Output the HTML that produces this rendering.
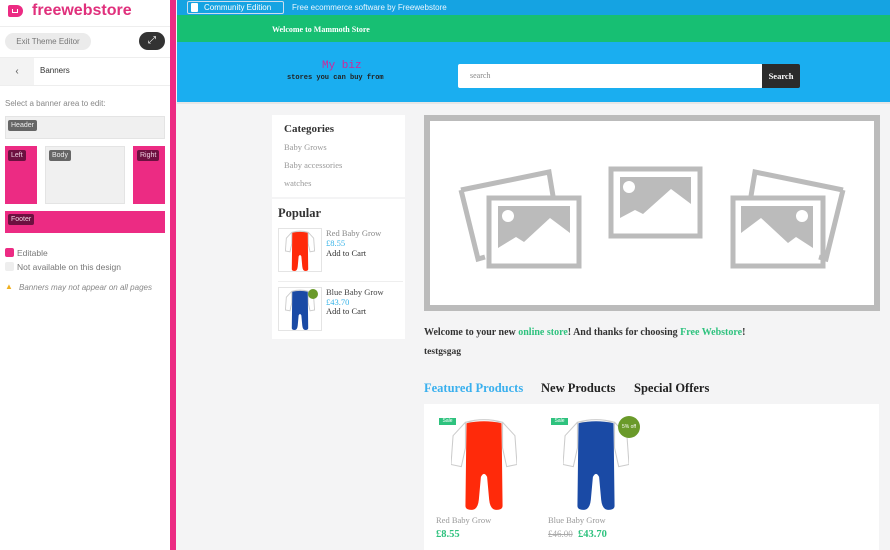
<!DOCTYPE html>
<html><head><meta charset="utf-8"><style>
*{margin:0;padding:0;box-sizing:border-box}
body{width:890px;height:550px;overflow:hidden;position:relative;background:#f4f4f5;font-family:"Liberation Sans",sans-serif}
.a{position:absolute}
.serif{font-family:"Liberation Serif",serif}
.tag{position:absolute;background:#6d1040;font-size:7px;color:#f0d0e0;padding:2px 3px;border-radius:2px}
</style></head><body>
<div class="a" style="left:0;top:0;width:170px;height:550px;background:#fff"></div>
<div class="a" style="left:170px;top:0;width:6px;height:550px;background:#ec2b83"></div>
<div class="a" style="left:8px;top:5px;width:15px;height:12px;background:#ec2b83;border-radius:2px 6px 6px 2px"></div>
<div class="a" style="left:12px;top:9px;width:6px;height:4px;border:1px solid #fff;border-top:none"></div>
<div class="a" style="left:32px;top:2px;font-size:16px;font-weight:bold;color:#e0307c">freewebstore</div>
<div class="a" style="left:0;top:26px;width:170px;height:1px;background:#eee"></div>
<div class="a" style="left:5px;top:33px;width:86px;height:17px;background:#ebebeb;border-radius:9px;font-size:8px;color:#777;text-align:center;line-height:17px">Exit Theme Editor</div>
<div class="a" style="left:139px;top:32px;width:26px;height:18px;background:#333;border-radius:9px;color:#fff;font-size:10px;text-align:center;line-height:18px">⤢</div>
<div class="a" style="left:0;top:57px;width:170px;height:1px;background:#eee"></div>
<div class="a" style="left:0;top:58px;width:34px;height:27px;background:#f3f3f3;font-size:10px;color:#555;text-align:center;line-height:27px">‹</div>
<div class="a" style="left:40px;top:66px;font-size:8px;color:#333">Banners</div>
<div class="a" style="left:0;top:85px;width:170px;height:1px;background:#eee"></div>
<div class="a" style="left:5px;top:99px;font-size:8px;color:#888">Select a banner area to edit:</div>
<div class="a" style="left:5px;top:116px;width:160px;height:23px;background:#f0f0f0;border:1px solid #e4e4e4"></div>
<div class="tag" style="left:8px;top:120px;background:#666;color:#eee">Header</div>
<div class="a" style="left:5px;top:146px;width:32px;height:58px;background:#ec2b83"></div>
<div class="tag" style="left:8px;top:150px">Left</div>
<div class="a" style="left:45px;top:146px;width:80px;height:58px;background:#f0f0f0;border:1px solid #e4e4e4"></div>
<div class="tag" style="left:49px;top:150px;background:#666;color:#eee">Body</div>
<div class="a" style="left:133px;top:146px;width:32px;height:58px;background:#ec2b83"></div>
<div class="tag" style="left:137px;top:150px">Right</div>
<div class="a" style="left:5px;top:211px;width:160px;height:22px;background:#ec2b83"></div>
<div class="tag" style="left:8px;top:214px">Footer</div>
<div class="a" style="left:5px;top:248px;width:9px;height:9px;background:#ec2b83;border-radius:2px"></div>
<div class="a" style="left:17px;top:248px;font-size:8.5px;color:#777">Editable</div>
<div class="a" style="left:5px;top:262px;width:9px;height:9px;background:#eee;border-radius:2px"></div>
<div class="a" style="left:17px;top:262px;font-size:8.5px;color:#777">Not available on this design</div>
<div class="a" style="left:5px;top:282px;font-size:8px;color:#f0b020">▲</div>
<div class="a" style="left:19px;top:283px;font-size:8px;color:#888;font-style:italic">Banners may not appear on all pages</div>

<div class="a" style="left:177px;top:0;width:713px;height:15px;background:#15a3e2"></div>
<div class="a" style="left:187px;top:1px;width:97px;height:13px;border:1px solid #cde;border-radius:2px;font-size:8px;color:#fff;line-height:11px;padding-left:16px">Community Edition</div>
<div class="a" style="left:191px;top:3px;width:7px;height:9px;background:#fff;border-radius:1px"></div>
<div class="a" style="left:292px;top:3px;font-size:8px;color:#eaf6ff">Free ecommerce software by Freewebstore</div>
<div class="a" style="left:177px;top:15px;width:713px;height:27px;background:#17bf73"></div>
<div class="a serif" style="left:272px;top:25px;font-size:8px;color:#fff;font-weight:bold">Welcome to Mammoth Store</div>
<div class="a" style="left:177px;top:42px;width:713px;height:60px;background:#1aaef0"></div>
<div class="a" style="left:177px;top:102px;width:713px;height:2px;background:#e6e6e6"></div>
<div class="a" style="left:322px;top:60px;font-family:'Liberation Mono',monospace;font-size:11px;color:#d2279a">My biz</div>
<div class="a" style="left:287px;top:74px;font-family:'Liberation Mono',monospace;font-size:7px;font-weight:bold;color:#222">stores you can buy from</div>
<div class="a" style="left:458px;top:64px;width:305px;height:24px;background:#fff;border-radius:2px"></div>
<div class="a serif" style="left:470px;top:71px;font-size:8px;color:#888">search</div>
<div class="a serif" style="left:762px;top:64px;width:38px;height:24px;background:#2b2b2b;border-radius:0 2px 2px 0;color:#fff;font-size:8.5px;font-weight:bold;text-align:center;line-height:24px">Search</div>

<div class="a" style="left:272px;top:115px;width:133px;height:82px;background:#fff"></div>
<div class="a serif" style="left:284px;top:123px;font-size:11px;font-weight:bold;color:#333">Categories</div>
<div class="a serif" style="left:284px;top:142px;font-size:8.5px;color:#999">Baby Grows</div>
<div class="a serif" style="left:284px;top:160px;font-size:8.5px;color:#999">Baby accessories</div>
<div class="a serif" style="left:284px;top:178px;font-size:8.5px;color:#999">watches</div>
<div class="a" style="left:272px;top:199px;width:133px;height:140px;background:#fff"></div>
<div class="a serif" style="left:278px;top:206px;font-size:12.5px;font-weight:bold;color:#333">Popular</div>
<div class="a" style="left:278px;top:228px;width:44px;height:44px;border:1px solid #e4e4e4;background:#fff"></div>
<svg class="a" style="left:283px;top:230px" width="34" height="41" viewBox="0 0 64 90"><path d="M14 5 Q32 0 50 5 L62 18 L64 46 L54 48 L50 30 L50 5 L14 5 L14 30 L10 48 L0 46 L2 18 Z" fill="#fff" stroke="#ccc" stroke-width="2"/><path d="M15 6 Q32 2 49 6 L50 86 Q50 90 44 90 Q38 90 37 80 L35 58 Q32 52 29 58 L27 80 Q26 90 20 90 Q14 90 14 86 Z" fill="#ff2a0a"/></svg>
<div class="a serif" style="left:326px;top:228px;font-size:8.5px;color:#888">Red Baby Grow</div>
<div class="a serif" style="left:326px;top:238px;font-size:8.5px;color:#35b3e8">£8.55</div>
<div class="a serif" style="left:326px;top:248px;font-size:8.5px;color:#333">Add to Cart</div>
<div class="a" style="left:278px;top:281px;width:125px;height:1px;background:#eee"></div>
<div class="a" style="left:278px;top:287px;width:44px;height:44px;border:1px solid #e4e4e4;background:#fff"></div>
<svg class="a" style="left:283px;top:289px" width="34" height="41" viewBox="0 0 64 90"><path d="M14 5 Q32 0 50 5 L62 18 L64 46 L54 48 L50 30 L50 5 L14 5 L14 30 L10 48 L0 46 L2 18 Z" fill="#fff" stroke="#ccc" stroke-width="2"/><path d="M15 6 Q32 2 49 6 L50 86 Q50 90 44 90 Q38 90 37 80 L35 58 Q32 52 29 58 L27 80 Q26 90 20 90 Q14 90 14 86 Z" fill="#1a4aa5"/></svg>
<div class="a" style="left:308px;top:289px;width:10px;height:10px;border-radius:50%;background:#6a9a2a"></div>
<div class="a serif" style="left:326px;top:287px;font-size:8.5px;color:#444">Blue Baby Grow</div>
<div class="a serif" style="left:326px;top:297px;font-size:8.5px;color:#35b3e8">£43.70</div>
<div class="a serif" style="left:326px;top:306px;font-size:8.5px;color:#333">Add to Cart</div>

<svg class="a" style="left:424px;top:115px" width="456" height="197" viewBox="0 0 456 197">
<rect x="3" y="3" width="450" height="190" fill="#fff" stroke="#bbb" stroke-width="6"/>
<g fill="none" stroke="#bbb" stroke-width="5">
<path d="M37 75 L125 57 L129 81 M61 142 L54 144 L37 75" />
<rect x="65" y="83" width="90" height="68"/>
<rect x="187" y="54" width="89" height="67"/>
<path d="M419 75 L331 57 L327 81 M395 142 L402 144 L419 75"/>
<rect x="309" y="83" width="90" height="68"/>
</g>
<g fill="#bbb">
<path d="M74 91 H146 V118 L126 103 L100 127 L92 122 L74 133 Z"/><circle cx="84" cy="101" r="6" fill="#fff"/>
<path d="M196 62 H267 V89 L247 74 L219 99 L211 95 L196 103 Z"/><circle cx="205" cy="72" r="6" fill="#fff"/>
<path d="M317 91 H389 V133 L372 122 L364 128 L337 103 L317 118 Z"/><circle cx="378" cy="101" r="6" fill="#fff"/>
</g>
</svg>

<div class="a serif" style="left:424px;top:327px;font-size:10px;font-weight:bold;color:#333;white-space:nowrap">Welcome to your new <span style="color:#2ec27e">online store</span>! And thanks for choosing <span style="color:#2ec27e">Free Webstore</span>!</div>
<div class="a serif" style="left:424px;top:347px;font-size:9.5px;font-weight:bold;color:#333">testgsgag</div>
<div class="a serif" style="left:424px;top:381px;font-size:12.5px;font-weight:bold;color:#3ab0ee">Featured Products</div>
<div class="a serif" style="left:541px;top:381px;font-size:12.5px;font-weight:bold;color:#222">New Products</div>
<div class="a serif" style="left:634px;top:381px;font-size:12.5px;font-weight:bold;color:#222">Special Offers</div>
<div class="a" style="left:424px;top:404px;width:455px;height:146px;background:#fff"></div>
<svg class="a" style="left:451px;top:417px" width="66" height="93" viewBox="0 0 64 90"><path d="M14 5 Q32 0 50 5 L62 18 L64 46 L54 48 L50 30 L50 5 L14 5 L14 30 L10 48 L0 46 L2 18 Z" fill="#fff" stroke="#ccc" stroke-width="1"/><path d="M15 6 Q32 2 49 6 L50 86 Q50 90 44 90 Q38 90 37 80 L35 58 Q32 52 29 58 L27 80 Q26 90 20 90 Q14 90 14 86 Z" fill="#ff2a0a"/></svg>
<svg class="a" style="left:563px;top:417px" width="66" height="93" viewBox="0 0 64 90"><path d="M14 5 Q32 0 50 5 L62 18 L64 46 L54 48 L50 30 L50 5 L14 5 L14 30 L10 48 L0 46 L2 18 Z" fill="#fff" stroke="#ccc" stroke-width="1"/><path d="M15 6 Q32 2 49 6 L50 86 Q50 90 44 90 Q38 90 37 80 L35 58 Q32 52 29 58 L27 80 Q26 90 20 90 Q14 90 14 86 Z" fill="#1a4aa5"/></svg>
<div class="a" style="left:439px;top:418px;width:17px;height:7px;background:#2ec27e;font-size:5px;color:#fff;text-align:center;line-height:7px">Sale</div>
<div class="a" style="left:551px;top:418px;width:17px;height:7px;background:#2ec27e;font-size:5px;color:#fff;text-align:center;line-height:7px">Sale</div>
<div class="a" style="left:618px;top:416px;width:22px;height:22px;border-radius:50%;background:#6a9a2a;font-size:5px;color:#fff;text-align:center;line-height:22px">5% off</div>
<div class="a serif" style="left:436px;top:515px;font-size:8.5px;color:#999">Red Baby Grow</div>
<div class="a serif" style="left:548px;top:515px;font-size:8.5px;color:#999">Blue Baby Grow</div>
<div class="a serif" style="left:436px;top:529px;font-size:10.5px;font-weight:bold;color:#2ec27e">£8.55</div>
<div class="a serif" style="left:548px;top:529px;font-size:9px;color:#aaa;text-decoration:line-through">£46.00</div>
<div class="a serif" style="left:578px;top:529px;font-size:10.5px;font-weight:bold;color:#2ec27e">£43.70</div>
</body></html>
